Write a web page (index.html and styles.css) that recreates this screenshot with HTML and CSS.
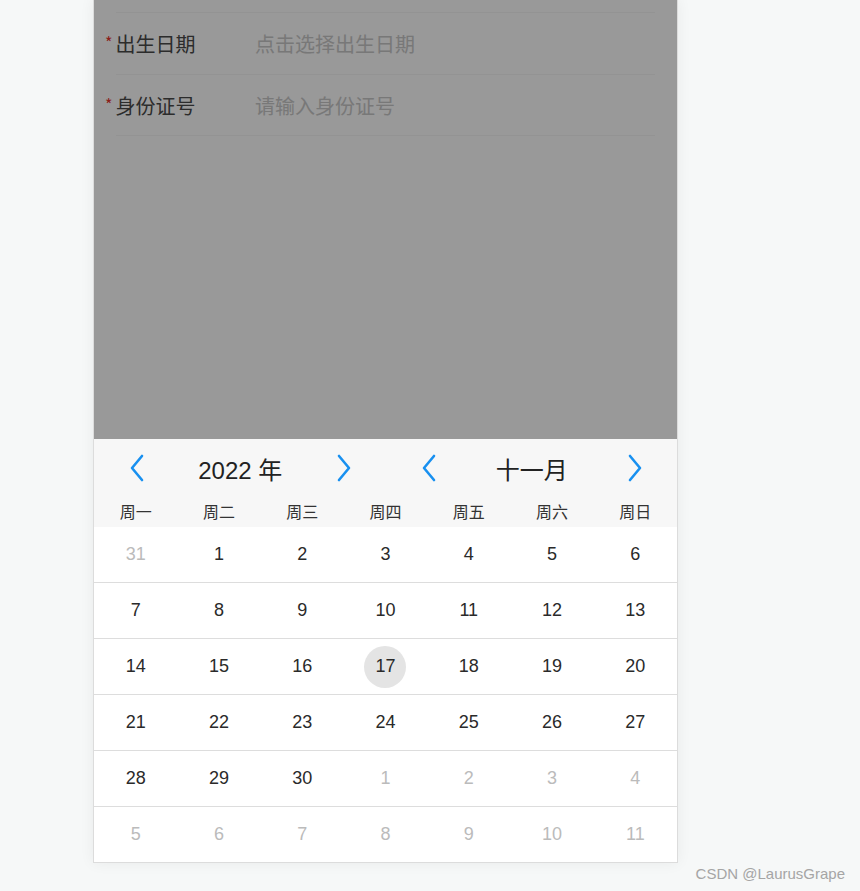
FILE: index.html
```html
<!DOCTYPE html>
<html lang="zh-CN">
<head>
    <meta charset="UTF-8">
    <meta name="viewport" content="width=device-width, initial-scale=1.0">
    <title>日期选择</title>
    <link rel="stylesheet" href="styles.css">
</head>
<body>
    <div class="phone">
        <form class="form">
            <div class="form-row">
                <label class="form-label"><span class="required">*</span>出生日期</label>
                <span class="form-input placeholder">点击选择出生日期</span>
            </div>
            <div class="form-row">
                <label class="form-label"><span class="required">*</span>身份证号</label>
                <span class="form-input placeholder">请输入身份证号</span>
            </div>
        </form>

        <div class="mask"></div>

        <div class="calendar">
            <div class="calendar-head">
                <div class="calendar-nav">
                    <div class="nav-group">
                        <button class="nav-btn" type="button">
                            <svg viewBox="0 0 16 28" width="16" height="28"><path d="M13 2 L3 14 L13 26" /></svg>
                        </button>
                        <span class="nav-title">2022 年</span>
                        <button class="nav-btn" type="button">
                            <svg viewBox="0 0 16 28" width="16" height="28"><path d="M3 2 L13 14 L3 26" /></svg>
                        </button>
                    </div>
                    <div class="nav-group">
                        <button class="nav-btn" type="button">
                            <svg viewBox="0 0 16 28" width="16" height="28"><path d="M13 2 L3 14 L13 26" /></svg>
                        </button>
                        <span class="nav-title">十一月</span>
                        <button class="nav-btn" type="button">
                            <svg viewBox="0 0 16 28" width="16" height="28"><path d="M3 2 L13 14 L3 26" /></svg>
                        </button>
                    </div>
                </div>
                <div class="weekdays">
                    <span>周一</span>
                    <span>周二</span>
                    <span>周三</span>
                    <span>周四</span>
                    <span>周五</span>
                    <span>周六</span>
                    <span>周日</span>
                </div>
            </div>
            <div class="days" id="days"></div>
        </div>
    </div>

    <div class="watermark">CSDN @LaurusGrape</div>

    <script>
        // November 2022, weeks start on Monday
        const daysEl = document.getElementById('days');
        const year = 2022;
        const month = 10;
        const today = 17;

        const first = new Date(year, month, 1);
        const offset = (first.getDay() + 6) % 7;
        const start = new Date(year, month, 1 - offset);

        for (let w = 0; w < 6; w++) {
            const row = document.createElement('div');
            row.className = 'week';
            for (let d = 0; d < 7; d++) {
                const date = new Date(start);
                date.setDate(start.getDate() + w * 7 + d);
                const cell = document.createElement('div');
                cell.className = 'day';
                if (date.getMonth() !== month) {
                    cell.classList.add('other');
                } else if (date.getDate() === today) {
                    cell.classList.add('active');
                }
                const num = document.createElement('span');
                num.textContent = date.getDate();
                cell.appendChild(num);
                row.appendChild(cell);
            }
            daysEl.appendChild(row);
        }
    </script>
</body>
</html>
```

FILE: styles.css
```css
:root {
    --blue: #1890f0;
    --text: #333;
    --muted: #bbb;
    --line: #ddd;
}

* {
    box-sizing: border-box;
}

body {
    margin: 0;
    height: 891px;
    overflow: hidden;
    background: #f6f8f8;
    font-family: "Liberation Sans", "Noto Sans CJK SC", sans-serif;
    color: var(--text);
    position: relative;
}

.phone {
    position: relative;
    width: 585px;
    height: 864px;
    margin: -1px 0 0 93px;
    background: #fff;
    border: 1px solid #dcdcdc;
    box-shadow: 0 0 14px rgba(0, 0, 0, 0.06);
    display: flex;
    flex-direction: column;
}

.form {
    flex: 1;
    padding-top: 12px;
}

.form-row {
    display: flex;
    align-items: center;
    height: 62px;
    margin: 0 22px;
    border-top: 1px solid #f5f5f5;
}

.form-row:last-child {
    border-bottom: 1px solid #f5f5f5;
}

.form-label {
    width: 150px;
    margin-left: -11px;
    font-family: "Noto Sans CJK SC", sans-serif;
    font-size: 20px;
    color: #4a4a4a;
}

.required {
    color: #e8322c;
    font-size: 16px;
    margin-right: 3px;
    position: relative;
    top: -3px;
}

.form-input {
    font-family: "Noto Sans CJK SC", sans-serif;
    font-size: 20px;
}

.placeholder {
    color: #c8c8c8;
}

.mask {
    position: absolute;
    inset: 0;
    background: rgba(0, 0, 0, 0.4);
    z-index: 1;
}

.calendar {
    position: relative;
    z-index: 2;
    background: #fff;
}

.calendar-head {
    background: #f7f7f7;
    height: 88px;
}

.calendar-nav {
    display: flex;
    height: 58px;
}

.nav-group {
    flex: 1;
    display: flex;
    align-items: center;
    justify-content: space-between;
    padding: 0 34px 0 35px;
}

.nav-btn {
    border: none;
    background: none;
    padding: 0;
    width: 16px;
    height: 28px;
    cursor: pointer;
}

.nav-btn svg path {
    fill: none;
    stroke: var(--blue);
    stroke-width: 2.6;
    stroke-linecap: round;
    stroke-linejoin: round;
}

.nav-title {
    font-family: "Liberation Sans", "Noto Sans CJK SC", sans-serif;
    font-size: 24px;
    color: #222;
}

.weekdays {
    display: grid;
    grid-template-columns: repeat(7, 1fr);
    height: 28px;
    align-items: center;
    text-align: center;
    font-family: "Noto Sans CJK SC", sans-serif;
    font-size: 16px;
    color: #333;
}

.week {
    display: grid;
    grid-template-columns: repeat(7, 1fr);
    height: 56px;
    border-bottom: 1px solid var(--line);
}

.week:last-child {
    border-bottom: none;
    height: 55px;
}

.day {
    display: flex;
    align-items: center;
    justify-content: center;
    font-size: 18px;
    color: #2a2a2a;
}

.day span {
    width: 42px;
    height: 42px;
    border-radius: 50%;
    display: flex;
    align-items: center;
    justify-content: center;
}

.day.other {
    color: var(--muted);
}

.day.active span {
    background: #e4e4e4;
}

.watermark {
    position: absolute;
    right: 15px;
    bottom: 9px;
    font-size: 15px;
    color: #a5a5a5;
}
```
